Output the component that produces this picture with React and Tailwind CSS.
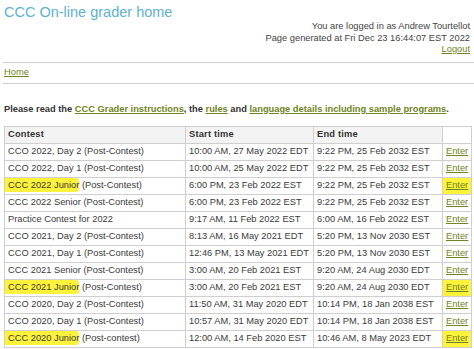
import React from "react";

const rows = [
  { c: "CCO 2022, Day 2 (Post-Contest)", s: "10:00 AM, 27 May 2022 EDT", e: "9:22 PM, 25 Feb 2032 EST" },
  { c: "CCO 2022, Day 1 (Post-Contest)", s: "10:00 AM, 25 May 2022 EDT", e: "9:22 PM, 25 Feb 2032 EST" },
  { c: "CCC 2022 Junior", rest: " (Post-Contest)", hl: true, s: "6:00 PM, 23 Feb 2022 EST", e: "9:22 PM, 25 Feb 2032 EST" },
  { c: "CCC 2022 Senior (Post-Contest)", s: "6:00 PM, 23 Feb 2022 EST", e: "9:22 PM, 25 Feb 2032 EST" },
  { c: "Practice Contest for 2022", s: "9:17 AM, 11 Feb 2022 EST", e: "6:00 AM, 16 Feb 2022 EST" },
  { c: "CCO 2021, Day 2 (Post-Contest)", s: "8:13 AM, 16 May 2021 EDT", e: "5:20 PM, 13 Nov 2030 EST" },
  { c: "CCO 2021, Day 1 (Post-Contest)", s: "12:46 PM, 13 May 2021 EDT", e: "5:20 PM, 13 Nov 2030 EST" },
  { c: "CCC 2021 Senior (Post-Contest)", s: "3:00 AM, 20 Feb 2021 EST", e: "9:20 AM, 24 Aug 2030 EDT" },
  { c: "CCC 2021 Junior", rest: " (Post-Contest)", hl: true, s: "3:00 AM, 20 Feb 2021 EST", e: "9:20 AM, 24 Aug 2030 EDT" },
  { c: "CCO 2020, Day 2 (Post-Contest)", s: "11:50 AM, 31 May 2020 EDT", e: "10:14 PM, 18 Jan 2038 EST" },
  { c: "CCO 2020, Day 1 (Post-Contest)", s: "10:57 AM, 31 May 2020 EDT", e: "10:14 PM, 18 Jan 2038 EST" },
  { c: "CCC 2020 Junior", rest: " (Post-contest)", hl: true, s: "12:00 AM, 14 Feb 2020 EST", e: "10:46 AM, 8 May 2023 EDT" },
];

const link = "text-[#6f8424] underline decoration-[#6f8424] underline-offset-[1px]";

export default function App() {
  return (
    <div className="w-[474px] h-[349px] overflow-hidden bg-white text-[#3a3a3a] text-[9.3px] leading-[11.5px]" style={{ fontFamily: '"Liberation Sans", Arial, sans-serif' }}>
      <div className="pl-[4px] pt-[3px] text-[14.5px] leading-[18px] text-[#5eb2cf]">CCC On-line grader home</div>
      <div className="flex flex-col items-end pr-[4px] text-[#444]">
        <div>You are logged in as Andrew Tourtellot</div>
        <div>Page generated at Fri Dec 23 16:44:07 EST 2022</div>
        <div><span className={link}>Logout</span></div>
      </div>
      <div className="mt-[6px] ml-[3px] h-px bg-[#d0d0d0]" />
      <div className="pl-[4px] h-[20px] flex items-center"><span className={link}>Home</span></div>
      <div className="ml-[3px] h-px bg-[#d0d0d0]" />
      <div className="mt-[20px] pl-[4px] font-bold text-[#333]">
        Please read the <span className={link}>CCC Grader instructions</span>, the <span className={link}>rules</span> and <span className={link}>language details including sample programs</span>.
      </div>
      <table className="mt-[11px] ml-[4px] w-[467px] border-collapse table-fixed">
        <colgroup>
          <col className="w-[181px]" />
          <col className="w-[128px]" />
          <col className="w-[129px]" />
          <col className="w-[29px]" />
        </colgroup>
        <thead>
          <tr className="h-[17px] bg-[#f3f3f3] font-bold text-[#333] tracking-[0.2px]">
            <td className="border border-[#cfcfcf] px-[3px]">Contest</td>
            <td className="border border-[#cfcfcf] px-[3px]">Start time</td>
            <td className="border border-[#cfcfcf] px-[3px]">End time</td>
            <td className="border border-[#cfcfcf] px-[3px] bg-white"></td>
          </tr>
        </thead>
        <tbody>
          {rows.map((r, i) => (
            <tr key={i} className="h-[17px]">
              <td className="border border-[#cfcfcf] px-[3px] whitespace-nowrap">
                {r.hl ? (
                  <>
                    <span className="bg-[#fff23a] -ml-[3px] pl-[3px] py-[2px] rounded-r-[3px]">{r.c}</span>
                    {r.rest}
                  </>
                ) : (
                  r.c
                )}
              </td>
              <td className="border border-[#cfcfcf] px-[3px] whitespace-nowrap">{r.s}</td>
              <td className="border border-[#cfcfcf] px-[3px] whitespace-nowrap">{r.e}</td>
              <td className={"border border-[#cfcfcf] px-[3px] whitespace-nowrap " + (r.hl ? "bg-[#fff23a]" : "")}>
                <span className={link}>Enter</span>
              </td>
            </tr>
          ))}
        </tbody>
      </table>
    </div>
  );
}
